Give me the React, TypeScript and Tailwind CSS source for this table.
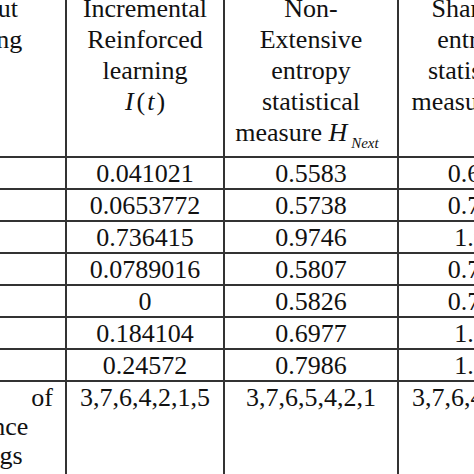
const rows = [
  { a: '', b: '0.041021', c: '0.5583', d: '0.672' },
  { a: '', b: '0.0653772', c: '0.5738', d: '0.735' },
  { a: '', b: '0.736415', c: '0.9746', d: '1.96' },
  { a: '', b: '0.0789016', c: '0.5807', d: '0.741' },
  { a: '', b: '0', c: '0.5826', d: '0.746' },
  { a: '', b: '0.184104', c: '0.6977', d: '1.05' },
  { a: '', b: '0.24572', c: '0.7986', d: '1.34' },
];

const cell = 'border-r-2 border-b-2 border-[#333]';
const bodyCell = `${cell} h-[32px] flex items-center justify-center pt-[1px] leading-[30px]`;

export default function App() {
  return (
    <div className="w-[474px] h-[474px] overflow-hidden bg-white text-[#111] text-[26px] font-serif">
      <div className="grid grid-cols-[150px_158px_174px_158px] -ml-[83px] -mt-[12px] [font-family:'Liberation_Serif',serif]">
        {/* header */}
        <div className={`${cell} border-t-2 h-[170px] pt-[3px] pl-[11px] pr-[12px] text-center leading-[31px]`}>
          <div>Input</div>
          <div>String</div>
        </div>
        <div className={`${cell} border-t-2 h-[170px] pt-[3px] text-center leading-[31px]`}>
          <div>Incremental</div>
          <div>Reinforced</div>
          <div>learning</div>
          <div>
            <i>I</i>
            <span className="ml-[3px]">(</span>
            <i className="mx-[2px]">t</i>
            <span>)</span>
          </div>
        </div>
        <div className={`${cell} border-t-2 h-[170px] pt-[3px] text-center leading-[31px]`}>
          <div>Non-</div>
          <div>Extensive</div>
          <div>entropy</div>
          <div>statistical</div>
          <div className="-ml-[8px]">
            measure <i>H</i>
            <i className="ml-[4px] text-[15px] leading-none align-[-7px]">Next</i>
          </div>
        </div>
        <div className={`${cell} border-t-2 h-[170px] pt-[3px] text-center leading-[31px]`}>
          <div>Shannon</div>
          <div>entropy</div>
          <div>statistical</div>
          <div>
            measure <i>H</i>
            <i className="ml-[4px] text-[15px] leading-none align-[-7px]">Sh</i>
          </div>
        </div>

        {/* body */}
        {rows.map((r, i) => (
          <div key={i} className="contents">
            <div className={bodyCell}>{r.a}</div>
            <div className={bodyCell}>{r.b}</div>
            <div className={bodyCell}>{r.c}</div>
            <div className={bodyCell}>{r.d}</div>
          </div>
        ))}

        {/* ranking row */}
        <div className={`${cell} h-[140px] pt-[1px] pl-[16px] pr-[12px] text-justify leading-[29px]`}>
          Order of sequence rankings
        </div>
        <div className={`${cell} h-[140px] pt-[1px] text-center leading-[29px]`}>3,7,6,4,2,1,5</div>
        <div className={`${cell} h-[140px] pt-[1px] text-center leading-[29px]`}>3,7,6,5,4,2,1</div>
        <div className={`${cell} h-[140px] pt-[1px] text-center leading-[29px]`}>3,7,6,4,5,2,1</div>
      </div>
    </div>
  );
}
